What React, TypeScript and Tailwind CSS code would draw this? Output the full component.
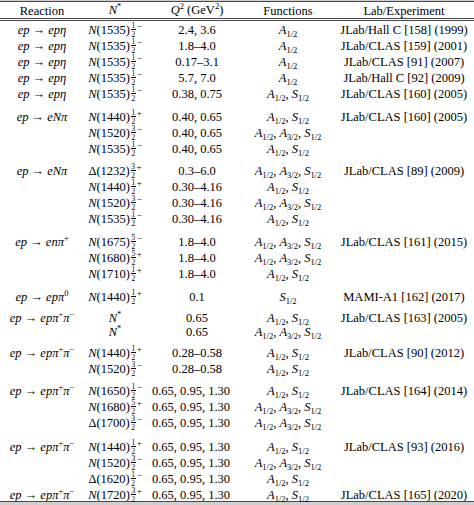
import React from "react";

type Fn = "A" | "AS" | "AAS" | "S";
type Nst = { kind: "N" | "D" | "star"; m?: string; a?: string; b?: string; s?: string };
type Row = { r?: string; n: Nst; q: string; f: Fn; lab?: string; h?: number };
type Group = { gap: number; rows: Row[] };

const Sub = ({ t }: { t: string }) => (
  <span className="relative top-[2.5px] text-[8.5px]">{t}</span>
);
const Sup = ({ t }: { t: string }) => (
  <span className="relative -top-[5px] text-[8.5px]">{t}</span>
);

const A = ({ s }: { s: string }) => (
  <span>
    <i>A</i>
    <Sub t={s} />
  </span>
);
const S = () => (
  <span>
    <i>S</i>
    <Sub t="1/2" />
  </span>
);

const Func = ({ f }: { f: Fn }) => {
  if (f === "A") return <A s="1/2" />;
  if (f === "S") return <S />;
  if (f === "AS")
    return (
      <span>
        <A s="1/2" />, <S />
      </span>
    );
  return (
    <span>
      <A s="1/2" />, <A s="3/2" />, <S />
    </span>
  );
};

const Frac = ({ a, b }: { a: string; b: string }) => (
  <span className="inline-flex flex-col items-center align-middle text-[7.5px] leading-[7px] ml-[1px] relative top-[-1px]">
    <span className="px-[0.5px]">{a}</span>
    <span className="border-t border-black w-full text-center pt-[0.5px]">{b}</span>
  </span>
);

const NCell = ({ n }: { n: Nst }) => {
  if (n.kind === "star")
    return (
      <span>
        <i>N</i>
        <Sup t="*" />
      </span>
    );
  return (
    <span>
      {n.kind === "N" ? <i>N</i> : <span>Δ</span>}({n.m})
      <Frac a={n.a!} b={n.b!} />
      <span className="relative -top-[5px] text-[9px] ml-[1px]">{n.s}</span>
    </span>
  );
};

const Reac = ({ r }: { r: string }) => {
  const pre = (
    <>
      <i>ep</i> → <i>e</i>
    </>
  );
  switch (r) {
    case "eta":
      return <span>{pre}<i>pη</i></span>;
    case "Npi":
      return <span>{pre}<i>Nπ</i></span>;
    case "npi+":
      return <span>{pre}<i>nπ</i><Sup t="+" /></span>;
    case "ppi0":
      return <span>{pre}<i>pπ</i><Sup t="0" /></span>;
    case "ppipi":
      return (
        <span>
          {pre}
          <i>pπ</i>
          <Sup t="+" />
          <i>π</i>
          <Sup t="−" />
        </span>
      );
  }
  return null;
};

const N = (m: string, a: string, b: string, s: string): Nst => ({ kind: "N", m, a, b, s });
const D = (m: string, a: string, b: string, s: string): Nst => ({ kind: "D", m, a, b, s });
const STAR: Nst = { kind: "star" };
const Q3 = "0.65, 0.95, 1.30";

const groups: Group[] = [
  {
    gap: 0,
    rows: [
      { r: "eta", n: N("1535", "1", "2", "−"), q: "2.4, 3.6", f: "A", lab: "JLab/Hall C [158] (1999)" },
      { r: "eta", n: N("1535", "1", "2", "−"), q: "1.8–4.0", f: "A", lab: "JLab/CLAS [159] (2001)" },
      { r: "eta", n: N("1535", "1", "2", "−"), q: "0.17–3.1", f: "A", lab: "JLab/CLAS [91] (2007)" },
      { r: "eta", n: N("1535", "1", "2", "−"), q: "5.7, 7.0", f: "A", lab: "JLab/Hall C [92] (2009)" },
      { r: "eta", n: N("1535", "1", "2", "−"), q: "0.38, 0.75", f: "AS", lab: "JLab/CLAS [160] (2005)" },
    ],
  },
  {
    gap: 7,
    rows: [
      { r: "Npi", n: N("1440", "1", "2", "+"), q: "0.40, 0.65", f: "AS", lab: "JLab/CLAS [160] (2005)" },
      { n: N("1520", "3", "2", "−"), q: "0.40, 0.65", f: "AAS" },
      { n: N("1535", "1", "2", "−"), q: "0.40, 0.65", f: "AS" },
    ],
  },
  {
    gap: 6,
    rows: [
      { r: "Npi", n: D("1232", "3", "2", "+"), q: "0.3–6.0", f: "AAS", lab: "JLab/CLAS [89] (2009)" },
      { n: N("1440", "1", "2", "+"), q: "0.30–4.16", f: "AS" },
      { n: N("1520", "3", "2", "−"), q: "0.30–4.16", f: "AAS" },
      { n: N("1535", "1", "2", "−"), q: "0.30–4.16", f: "AS" },
    ],
  },
  {
    gap: 7,
    rows: [
      { r: "npi+", n: N("1675", "5", "2", "−"), q: "1.8–4.0", f: "AAS", lab: "JLab/CLAS [161] (2015)" },
      { n: N("1680", "5", "2", "+"), q: "1.8–4.0", f: "AAS" },
      { n: N("1710", "1", "2", "+"), q: "1.8–4.0", f: "AS" },
    ],
  },
  {
    gap: 7,
    rows: [{ r: "ppi0", n: N("1440", "1", "2", "+"), q: "0.1", f: "S", lab: "MAMI-A1 [162] (2017)" }],
  },
  {
    gap: 5,
    rows: [
      { r: "ppipi", n: STAR, q: "0.65", f: "AS", lab: "JLab/CLAS [163] (2005)", h: 14 },
      { n: STAR, q: "0.65", f: "AAS", h: 14 },
    ],
  },
  {
    gap: 7,
    rows: [
      { r: "ppipi", n: N("1440", "1", "2", "+"), q: "0.28–0.58", f: "AS", lab: "JLab/CLAS [90] (2012)" },
      { n: N("1520", "3", "2", "−"), q: "0.28–0.58", f: "AS" },
    ],
  },
  {
    gap: 6,
    rows: [
      { r: "ppipi", n: N("1650", "1", "2", "−"), q: Q3, f: "AS", lab: "JLab/CLAS [164] (2014)" },
      { n: N("1680", "5", "2", "+"), q: Q3, f: "AAS" },
      { n: D("1700", "3", "2", "−"), q: Q3, f: "AAS" },
    ],
  },
  {
    gap: 8,
    rows: [
      { r: "ppipi", n: N("1440", "1", "2", "+"), q: Q3, f: "AS", lab: "JLab/CLAS [93] (2016)" },
      { n: N("1520", "3", "2", "−"), q: Q3, f: "AAS" },
      { n: D("1620", "1", "2", "−"), q: Q3, f: "AS" },
    ],
  },
  {
    gap: 0,
    rows: [{ r: "ppipi", n: N("1720", "3", "2", "+"), q: Q3, f: "AS", lab: "JLab/CLAS [165] (2020)", h: 15 }],
  },
];

const grid = "grid grid-cols-[84px_62px_102px_80px_146px] items-center";

export default function App() {
  return (
    <div className="w-[474px] h-[505px] bg-white text-black font-['Liberation_Serif',serif] text-[12.5px] overflow-hidden flex flex-col">
      <div className="h-[1px] bg-[#cfcfcf]" />
      <div className="h-[1px] bg-[#4a4a4a]" />
      <div className={`${grid} h-[16px] leading-[16px]`}>
        <div className="text-center">Reaction</div>
        <div className="text-center">
          <i>N</i>
          <Sup t="*" />
        </div>
        <div className="text-center">
          <i>Q</i>
          <Sup t="2" /> (GeV<Sup t="2" />)
        </div>
        <div className="text-center">Functions</div>
        <div className="text-center pl-[6px]">Lab/Experiment</div>
      </div>
      <div className="h-[1px] bg-[#4a4a4a]" />
      <div className="h-[1px]" />
      <div className="h-[1px] bg-[#4a4a4a]" />
      <div className="flex flex-col">
        {groups.map((g, gi) => (
          <div key={gi} className="flex flex-col" style={{ marginTop: g.gap }}>
            {g.rows.map((row, ri) => (
              <div key={ri} className={`${grid} whitespace-nowrap`} style={{ height: row.h ?? 16 }}>
                <div className="text-center">{row.r ? <Reac r={row.r} /> : null}</div>
                <div className="text-center">
                  <NCell n={row.n} />
                </div>
                <div className={`text-center ${row.q === Q3 ? "pr-[12px]" : ""}`}>{row.q}</div>
                <div className="text-center">
                  <Func f={row.f} />
                </div>
                <div className="text-center pl-[6px]">{row.lab ?? ""}</div>
              </div>
            ))}
          </div>
        ))}
      </div>
      <div className="h-[1px] bg-[#4a4a4a]" />
      <div className="flex-1 bg-[#cfcfcf]" />
    </div>
  );
}
